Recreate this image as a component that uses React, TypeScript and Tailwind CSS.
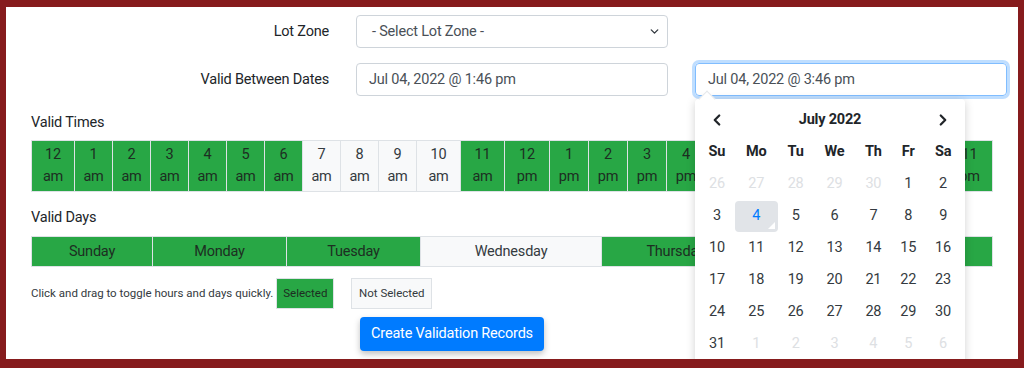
import React from 'react';
import { ChevronLeft, ChevronRight, ChevronDown } from 'lucide-react';

const hours = [
  { h: '12', p: 'am', w: 44, on: true },
  { h: '1', p: 'am', w: 38, on: true },
  { h: '2', p: 'am', w: 38, on: true },
  { h: '3', p: 'am', w: 38, on: true },
  { h: '4', p: 'am', w: 38, on: true },
  { h: '5', p: 'am', w: 38, on: true },
  { h: '6', p: 'am', w: 38, on: true },
  { h: '7', p: 'am', w: 38, on: false },
  { h: '8', p: 'am', w: 38, on: false },
  { h: '9', p: 'am', w: 38, on: false },
  { h: '10', p: 'am', w: 44, on: false },
  { h: '11', p: 'am', w: 44, on: true },
  { h: '12', p: 'pm', w: 45, on: true },
  { h: '1', p: 'pm', w: 39, on: true },
  { h: '2', p: 'pm', w: 39, on: true },
  { h: '3', p: 'pm', w: 39, on: true },
  { h: '4', p: 'pm', w: 39, on: true },
  { h: '5', p: 'pm', w: 39, on: true },
  { h: '6', p: 'pm', w: 39, on: true },
  { h: '7', p: 'pm', w: 39, on: true },
  { h: '8', p: 'pm', w: 39, on: true },
  { h: '9', p: 'pm', w: 39, on: true },
  { h: '10', p: 'pm', w: 46, on: true },
  { h: '11', p: 'pm', w: 46, on: true },
];

const days = [
  { d: 'Sunday', w: 122, on: true },
  { d: 'Monday', w: 134, on: true },
  { d: 'Tuesday', w: 134, on: true },
  { d: 'Wednesday', w: 181, on: false },
  { d: 'Thursday', w: 148, on: true },
  { d: 'Friday', w: 103, on: true },
  { d: 'Saturday', w: 140, on: true },
];

const colW = [36, 43, 36, 42, 36, 34, 36];
const weekdays = ['Su', 'Mo', 'Tu', 'We', 'Th', 'Fr', 'Sa'];
const weeks: { n: number; muted?: boolean; today?: boolean }[][] = [
  [{ n: 26, muted: true }, { n: 27, muted: true }, { n: 28, muted: true }, { n: 29, muted: true }, { n: 30, muted: true }, { n: 1 }, { n: 2 }],
  [{ n: 3 }, { n: 4, today: true }, { n: 5 }, { n: 6 }, { n: 7 }, { n: 8 }, { n: 9 }],
  [{ n: 10 }, { n: 11 }, { n: 12 }, { n: 13 }, { n: 14 }, { n: 15 }, { n: 16 }],
  [{ n: 17 }, { n: 18 }, { n: 19 }, { n: 20 }, { n: 21 }, { n: 22 }, { n: 23 }],
  [{ n: 24 }, { n: 25 }, { n: 26 }, { n: 27 }, { n: 28 }, { n: 29 }, { n: 30 }],
  [{ n: 31 }, { n: 1, muted: true }, { n: 2, muted: true }, { n: 3, muted: true }, { n: 4, muted: true }, { n: 5, muted: true }, { n: 6, muted: true }],
];

const DatePicker: React.FC = () => (
  <div className="absolute left-0 top-[36px] z-10 w-[270px] rounded bg-white px-[4px] pt-[5px] pb-2 shadow-[0_2px_10px_rgba(0,0,0,0.18)]">
    <div className="absolute -top-[6px] left-[6px] h-[12px] w-[12px] rotate-45 border-l border-t border-[#e5e7ea] bg-white" />
    <div className="relative flex h-[32px] items-center text-[#212529]">
      <div style={{ width: colW[0] }} className="flex justify-center">
        <ChevronLeft size={18} strokeWidth={3} />
      </div>
      <div className="flex-1 text-center font-bold">July 2022</div>
      <div style={{ width: colW[6] }} className="flex justify-center">
        <ChevronRight size={18} strokeWidth={3} />
      </div>
    </div>
    <div className="flex h-[32px] items-center font-bold text-[#212529]">
      {weekdays.map((w, i) => (
        <div key={w} style={{ width: colW[i] }} className="text-center">{w}</div>
      ))}
    </div>
    {weeks.map((row, r) => (
      <div key={r} className="flex h-[32px] items-center">
        {row.map((c, i) => (
          <div key={i} style={{ width: colW[i] }} className="flex h-full items-center justify-center">
            {c.today ? (
              <div className="relative flex h-[31px] w-[43px] items-center justify-center rounded bg-[#e1e4e8] text-[#007bff]">
                {c.n}
                <span className="absolute bottom-[3px] right-[3px] h-0 w-0 border-b-[7px] border-l-[7px] border-b-white border-l-transparent" />
              </div>
            ) : (
              <span className={c.muted ? 'text-[#dde0e3]' : 'text-[#343a40]'}>{c.n}</span>
            )}
          </div>
        ))}
      </div>
    ))}
  </div>
);

const App: React.FC = () => {
  return (
    <div
      className="h-[368px] w-[1024px] overflow-hidden bg-[#861b1d] pt-[7px] pr-[6px] pb-[9px] pl-[6px] text-[14.5px] tracking-[-0.2px] text-[#212529]"
      style={{ fontFamily: 'Roboto, "Open Sans", sans-serif' }}
    >
      <div className="relative h-full overflow-hidden bg-white pt-[8px] pl-[25px] pr-[25px]">
        <div className="flex h-[33px] items-center">
          <label className="w-[298px] shrink-0 text-right">Lot Zone</label>
          <div className="ml-[27px] flex h-[33px] w-[312px] shrink-0 items-center justify-between rounded border border-[#ced4da] pl-[15px] pr-[6px] text-[#495057]">
            <span>- Select Lot Zone -</span>
            <ChevronDown size={13} strokeWidth={2.5} className="text-[#343a40]" />
          </div>
        </div>

        <div className="mt-[15px] flex h-[33px] items-center">
          <label className="w-[298px] shrink-0 text-right">Valid Between Dates</label>
          <div className="ml-[27px] flex h-[33px] w-[312px] shrink-0 items-center rounded border border-[#ced4da] px-[12px] text-[#495057]">
            Jul 04, 2022 @ 1:46 pm
          </div>
          <div className="relative ml-[27px] w-[312px] shrink-0">
            <div className="flex h-[33px] items-center rounded border border-[#80bdff] px-[12px] text-[#495057] shadow-[0_0_0_3px_rgba(0,123,255,0.25)]">
              Jul 04, 2022 @ 3:46 pm
            </div>
            <DatePicker />
          </div>
        </div>

        <div className="mt-[15px] leading-[24px]">Valid Times</div>
        <div className="mt-[5px] flex">
          {hours.map((c, i) => (
            <div
              key={i}
              style={{ width: c.w }}
              className={`flex h-[52px] shrink-0 flex-col items-center justify-center border-y border-r border-[#dee2e6] leading-[22px] ${i === 0 ? 'border-l' : ''} ${c.on ? 'bg-[#28a745] text-[#1d2e22]' : 'bg-[#f8f9fa] text-[#343a40]'}`}
            >
              <span>{c.h}</span>
              <span>{c.p}</span>
            </div>
          ))}
        </div>

        <div className="mt-[14px] leading-[24px]">Valid Days</div>
        <div className="mt-[6px] flex">
          {days.map((c, i) => (
            <div
              key={c.d}
              style={{ width: c.w }}
              className={`flex h-[31px] shrink-0 items-center justify-center border-y border-r border-[#dee2e6] ${i === 0 ? 'border-l' : ''} ${c.on ? 'bg-[#28a745] text-[#1d2e22]' : 'bg-[#f8f9fa] text-[#343a40]'}`}
            >
              {c.d}
            </div>
          ))}
        </div>

        <div className="mt-[11px] flex items-center text-[11.5px] tracking-normal">
          <span className="text-[#343a40]">Click and drag to toggle hours and days quickly.</span>
          <span className="ml-[3px] flex h-[31px] w-[58px] items-center justify-center border border-[#dee2e6] bg-[#28a745] text-[#1d2e22]">
            Selected
          </span>
          <span className="ml-[17px] flex h-[31px] w-[81px] items-center justify-center border border-[#dee2e6] bg-[#f8f9fa] text-[#343a40]">
            Not Selected
          </span>
        </div>

        <button className="ml-[329px] mt-[8px] h-[34px] w-[184px] rounded bg-[#007bff] text-white shadow-[0_3px_6px_rgba(0,0,0,0.25)]">
          Create Validation Records
        </button>
      </div>
    </div>
  );
};

export default App;
